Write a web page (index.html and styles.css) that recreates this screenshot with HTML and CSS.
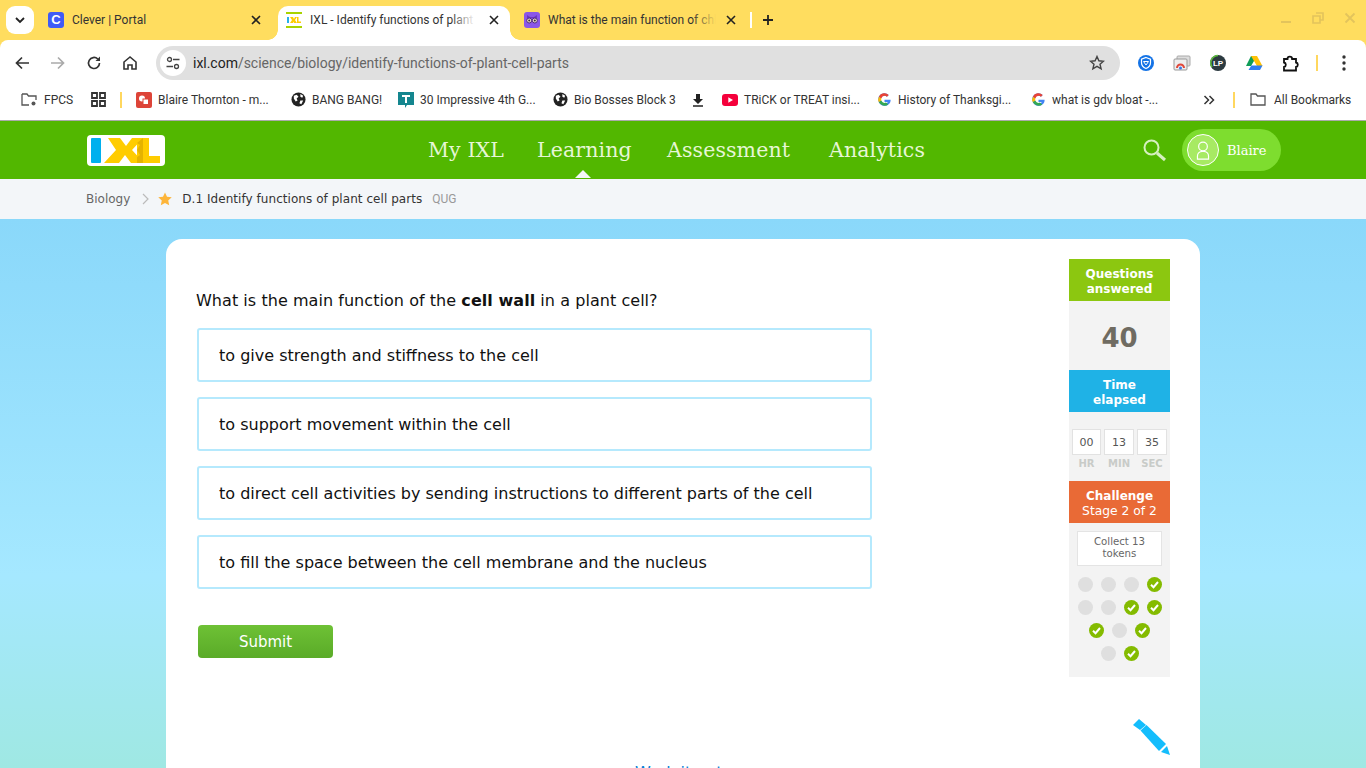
FILE: index.html
```html
<!DOCTYPE html>
<html lang="en">
<head>
<meta charset="utf-8">
<title>IXL - Identify functions of plant cell parts</title>
<link rel="stylesheet" href="styles.css">
</head>
<body>
<div class="tabbar">
  <div class="tab-menu"><svg width="10" height="7" viewBox="0 0 10 7"><path d="M1 1l4 4 4-4" fill="none" stroke="#222" stroke-width="1.8"/></svg></div>
  <div class="tab tab-clever">
    <span class="fav fav-c">C</span><span class="tab-title">Clever | Portal</span>
    <svg class="tab-x" width="10" height="10" viewBox="0 0 10 10"><path d="M1 1l8 8M9 1l-8 8" stroke="#222" stroke-width="1.6"/></svg>
  </div>
  <div class="tab tab-active">
    <svg class="fav" width="16" height="16" viewBox="0 0 16 16"><rect y="0" width="16" height="2" fill="#a9d300"/><rect y="14" width="16" height="2" fill="#a9d300"/><rect x="1" y="5" width="2" height="6" fill="#26b0ea"/><path d="M4 5h3l1 2 1-2h2l-2 3 2 3H8L7.500 9.500 7 11H4l2-3z" fill="#fc0"/><path d="M11 5h1.500v4.500H15V11h-4z" fill="#fc0"/></svg>
    <span class="tab-title tab-fade">IXL - Identify functions of plant cell parts</span>
    <svg class="tab-x" width="10" height="10" viewBox="0 0 10 10"><path d="M1 1l8 8M9 1l-8 8" stroke="#222" stroke-width="1.6"/></svg>
  </div>
  <div class="tab tab-third">
    <svg class="fav" width="16" height="16" viewBox="0 0 16 16"><rect width="16" height="16" rx="3" fill="#8a56e8"/><path d="M3 3l3 2h4l3-2v3H3z" fill="#6d35bf"/><circle cx="5.200" cy="8.500" r="2.500" fill="#f3d9d0" stroke="#4a2a80"/><circle cx="10.800" cy="8.500" r="2.500" fill="#f3d9d0" stroke="#4a2a80"/><circle cx="5.200" cy="8.500" r="1" fill="#333"/><circle cx="10.800" cy="8.500" r="1" fill="#333"/></svg>
    <span class="tab-title tab-fade-y">What is the main function of chloroplasts</span>
    <svg class="tab-x" width="10" height="10" viewBox="0 0 10 10"><path d="M1 1l8 8M9 1l-8 8" stroke="#222" stroke-width="1.6"/></svg>
  </div>
  <span class="tab-sep"></span>
  <svg class="tab-plus" width="12" height="12" viewBox="0 0 12 12"><path d="M6 1v10M1 6h10" stroke="#222" stroke-width="1.800"/></svg>
  <div class="win-controls">
    <svg width="12" height="12" viewBox="0 0 12 12"><path d="M1 10h10" stroke="#e3c45c" stroke-width="2"/></svg>
    <svg width="12" height="12" viewBox="0 0 12 12"><path d="M4 1h7v7H8.500M1 4h7v7H1z" fill="none" stroke="#e3c45c" stroke-width="1.600"/></svg>
    <svg width="12" height="12" viewBox="0 0 12 12"><path d="M1.500 1.500l9 9M10.500 1.500l-9 9" stroke="#e3c45c" stroke-width="1.800"/></svg>
  </div>
</div>
<div class="toolbar">
  <svg class="tool" width="16" height="16" viewBox="0 0 16 16"><path d="M15 8H2.500M8 2.500L2.500 8 8 13.500" fill="none" stroke="#333" stroke-width="1.700"/></svg>
  <svg class="tool" width="16" height="16" viewBox="0 0 16 16"><path d="M1 8h12.500M8 2.500L13.500 8 8 13.500" fill="none" stroke="#aaa" stroke-width="1.700"/></svg>
  <svg class="tool" width="16" height="16" viewBox="0 0 16 16"><path d="M13.500 8A5.500 5.500 0 1 1 11.800 4" fill="none" stroke="#333" stroke-width="1.700"/><path d="M14 1.500V6H9.500z" fill="#333"/></svg>
  <svg class="tool" width="16" height="16" viewBox="0 0 16 16"><path d="M8 2L2 7v7h4v-4h4v4h4V7z" fill="none" stroke="#333" stroke-width="1.600"/></svg>
  <div class="omnibox">
    <span class="site-chip"><svg width="14" height="14" viewBox="0 0 14 14"><circle cx="3.500" cy="3.500" r="2" fill="none" stroke="#444" stroke-width="1.300"/><path d="M7 3.500h6.500M.500 10.500H7" stroke="#444" stroke-width="1.300"/><circle cx="10.500" cy="10.500" r="2" fill="none" stroke="#444" stroke-width="1.300"/></svg></span>
    <span class="url"><span class="url-host">ixl.com</span>/science/biology/identify-functions-of-plant-cell-parts</span>
    <svg class="star" width="16" height="16" viewBox="0 0 16 16"><path d="M8 1.500l1.900 4.300 4.600.4-3.500 3 1.100 4.600L8 11.300l-4.100 2.500L5 9.200l-3.500-3 4.600-.4z" fill="none" stroke="#444" stroke-width="1.400"/></svg>
  </div>
  <div class="extensions">
    <svg width="18" height="18" viewBox="0 0 18 18"><circle cx="9" cy="9" r="8" fill="#1473e6"/><path d="M9 3.500l4.500 1.700v3.500c0 2.800-2 4.700-4.500 5.800-2.500-1.100-4.500-3-4.500-5.800V5.200z" fill="none" stroke="#fff" stroke-width="1.200"/><path d="M6.500 7.500h5L9 11z" fill="none" stroke="#fff"/></svg>
    <svg width="18" height="18" viewBox="0 0 18 18"><rect x="4" y="2" width="13" height="10" rx="1" fill="#ddd" stroke="#aaa"/><rect x="1" y="5" width="13" height="11" rx="1" fill="#eee" stroke="#999"/><path d="M4 14a3.500 3.500 0 0 1 7 0" fill="none" stroke="#e0483b" stroke-width="2"/><circle cx="7.500" cy="14" r="1.500" fill="#3b78e7"/></svg>
    <svg width="18" height="18" viewBox="0 0 18 18"><circle cx="9" cy="9" r="8" fill="#2c3a40"/><path d="M9 1.500A7.500 7.500 0 0 0 3 13" fill="none" stroke="#5ebd3e" stroke-width="1.500"/><text class="lp" x="9" y="11.500" text-anchor="middle">LP</text></svg>
    <svg width="18" height="16" viewBox="0 0 18 16"><path d="M6 1h6l-6 10H1z" fill="#0f9d58"/><path d="M6 1h6l5.500 10h-5.500z" fill="#ffc107"/><path d="M3.500 15l2.800-4.500h11.200L15 15z" fill="#2f7df0"/></svg>
    <svg width="18" height="18" viewBox="0 0 18 18"><path d="M3 5h3.500a2.300 2.300 0 0 1 4.600 0H15v3.500a2.300 2.300 0 0 1 0 4.500V16.500H3v-3.500a2.300 2.300 0 0 0 0-4.500z" fill="none" stroke="#111" stroke-width="1.800"/></svg>
    <span class="ext-sep"></span>
    <svg width="4" height="16" viewBox="0 0 4 16"><circle cx="2" cy="2" r="1.700" fill="#333"/><circle cx="2" cy="8" r="1.700" fill="#333"/><circle cx="2" cy="14" r="1.700" fill="#333"/></svg>
  </div>
</div>
<div class="bookmarks">
  <span class="bm bm-fpcs"><svg width="16" height="14" viewBox="0 0 16 14"><path d="M1 1h5l1.500 2H15v4M1 1v11h7" fill="none" stroke="#555" stroke-width="1.300"/><circle cx="12.500" cy="10.500" r="2" fill="#555"/></svg>FPCS</span>
  <svg class="bm-grid" width="15" height="15" viewBox="0 0 15 15"><path d="M1 1h5v5H1zM9 1h5v5H9zM1 9h5v5H1zM9 9h5v5H9z" fill="none" stroke="#333" stroke-width="1.800"/></svg>
  <span class="bm-sep"></span>
  <span class="bm bm-blaire"><svg width="16" height="16" viewBox="0 0 16 16"><rect width="16" height="16" rx="2" fill="#dd4438"/><circle cx="6" cy="6.500" r="3" fill="#fff"/><rect x="7" y="7" width="5.500" height="5.500" fill="#fff" stroke="#dd4438"/></svg>Blaire Thornton - m...</span>
  <span class="bm bm-bang"><svg class="globe" viewBox="0 0 16 16"><circle cx="8" cy="8" r="7.500" fill="#222"/><path d="M3 4l3-1 2 2-2 2 1 2-2 1-2-3zM10 2l3 2-1 2-2-1zM10 9l3 0-2 4-2-1z" fill="#fff"/></svg>BANG BANG!</span>
  <span class="bm bm-30"><svg width="16" height="16" viewBox="0 0 16 16"><path d="M0 0h16v13H9l-2 3v-3H0z" fill="#14868f"/><path d="M4 3h8v2H9v6H7V5H4z" fill="#fff"/></svg>30 Impressive 4th G...</span>
  <span class="bm bm-bio"><svg class="globe" viewBox="0 0 16 16"><circle cx="8" cy="8" r="7.500" fill="#222"/><path d="M3 4l3-1 2 2-2 2 1 2-2 1-2-3zM10 2l3 2-1 2-2-1zM10 9l3 0-2 4-2-1z" fill="#fff"/></svg>Bio Bosses Block 3</span>
  <span class="bm bm-dl"><svg width="12" height="14" viewBox="0 0 12 14"><path d="M4 1h4v5h3l-5 5-5-5h3z" fill="#222"/><path d="M1 13h10" stroke="#222" stroke-width="1.500"/></svg></span>
  <span class="bm bm-yt"><svg width="16" height="12" viewBox="0 0 16 12"><rect width="16" height="12" rx="3" fill="#f5003b"/><path d="M6.300 3.200L11 6l-4.700 2.800z" fill="#fff"/></svg>TRiCK or TREAT insi...</span>
  <span class="bm bm-hist"><svg class="g" viewBox="0 0 16 16"><path d="M14.500 8.200H8v2.500h3.700A3.900 3.900 0 0 1 8 12a4 4 0 0 1 0-8c1 0 1.900.4 2.600 1l1.900-1.900A6.700 6.700 0 0 0 1.300 8 6.700 6.700 0 0 0 8 14.700c3.800 0 6.700-2.800 6.500-6.500z" fill="#4285f4"/><path d="M2 5l2.600 1.900A4 4 0 0 1 8 4c1 0 1.900.4 2.600 1l1.900-1.900A6.700 6.700 0 0 0 2 5z" fill="#ea4335"/><path d="M2 5a6.700 6.700 0 0 0 0 6l2.600-2a4 4 0 0 1 0-2.100z" fill="#fbbc05"/><path d="M2 11a6.700 6.700 0 0 0 10 2.200l-2.400-1.900A4 4 0 0 1 4.600 9z" fill="#34a853"/></svg>History of Thanksgi...</span>
  <span class="bm bm-gdv"><svg class="g" viewBox="0 0 16 16"><path d="M14.500 8.200H8v2.500h3.700A3.900 3.900 0 0 1 8 12a4 4 0 0 1 0-8c1 0 1.900.4 2.600 1l1.900-1.900A6.700 6.700 0 0 0 1.300 8 6.700 6.700 0 0 0 8 14.700c3.800 0 6.700-2.800 6.500-6.500z" fill="#4285f4"/><path d="M2 5l2.600 1.900A4 4 0 0 1 8 4c1 0 1.900.4 2.600 1l1.900-1.900A6.700 6.700 0 0 0 2 5z" fill="#ea4335"/><path d="M2 5a6.700 6.700 0 0 0 0 6l2.600-2a4 4 0 0 1 0-2.100z" fill="#fbbc05"/><path d="M2 11a6.700 6.700 0 0 0 10 2.200l-2.400-1.900A4 4 0 0 1 4.600 9z" fill="#34a853"/></svg>what is gdv bloat -...</span>
  <svg class="bm-more" width="12" height="10" viewBox="0 0 12 10"><path d="M1.500 1l4 4-4 4M6.500 1l4 4-4 4" fill="none" stroke="#333" stroke-width="1.500"/></svg>
  <span class="bm-sep bm-sep-r"></span>
  <span class="bm bm-all"><svg width="16" height="13" viewBox="0 0 16 13"><path d="M1 1h5l1.500 2H15v9H1z" fill="none" stroke="#555" stroke-width="1.300"/></svg>All Bookmarks</span>
</div>
<header class="ixl-nav">
  <div class="ixl-logo"><svg width="78" height="31" viewBox="0 0 78 31"><rect x="4" y="3" width="10" height="25" rx="1" fill="#00b0ee"/><path d="M21 3h12l6 8 6-8h11L45 15l12 13H44l-6-8-6 8H17l12-13z" fill="#fc0"/><path d="M50 3h12v18h11v7H50z" fill="#fc0"/><path d="M50 8l6-5v25h-6v-6l3-2-3-5 3-5z" fill="#e5b300"/></svg></div>
  <nav class="ixl-links">
    <a>My IXL</a>
    <a class="on">Learning</a>
    <a>Assessment</a>
    <a>Analytics</a>
  </nav>
  <svg class="ixl-search" width="24" height="24" viewBox="0 0 24 24"><circle cx="9.500" cy="9.500" r="7" fill="none" stroke="#d6f0bf" stroke-width="2"/><path d="M15 15l8 7" stroke="#d6f0bf" stroke-width="3"/></svg>
  <div class="user-pill">
    <span class="avatar"><svg width="16" height="19" viewBox="0 0 20 24"><circle cx="10" cy="7" r="5.500" fill="none" stroke="#fff" stroke-width="1.500"/><path d="M3 23v-4a6 6 0 0 1 6-6h2a6 6 0 0 1 6 6v4z" fill="none" stroke="#fff" stroke-width="1.500"/></svg></span>
    <span class="user-name">Blaire</span>
  </div>
</header>
<div class="crumbs">
  <span class="crumb-root">Biology</span>
  <svg class="crumb-arrow" width="8" height="12" viewBox="0 0 8 12"><path d="M1 1l5 5-5 5" fill="none" stroke="#bbb" stroke-width="1.200"/></svg>
  <svg class="crumb-star" width="14" height="14" viewBox="0 0 16 16"><path d="M8 .5l2.300 5 5.400.6-4 3.700 1.100 5.400L8 12.500l-4.800 2.700 1.100-5.400-4-3.700 5.400-.6z" fill="#fdb53a"/></svg>
  <span class="crumb-title">D.1 Identify functions of plant cell parts</span>
  <span class="crumb-code">QUG</span>
</div>
<main class="stage">
  <section class="card">
    <div class="practice">
      <p class="question">What is the main function of the <b>cell wall</b> in a plant cell?</p>
      <div class="choices">
        <div class="choice">to give strength and stiffness to the cell</div>
        <div class="choice">to support movement within the cell</div>
        <div class="choice">to direct cell activities by sending instructions to different parts of the cell</div>
        <div class="choice">to fill the space between the cell membrane and the nucleus</div>
      </div>
      <button class="submit">Submit</button>
      <p class="work-link"><a>Work it out</a></p>
    </div>
    <aside class="side">
      <div class="panel">
        <div class="head head-green">Questions<br>answered</div>
        <div class="count">40</div>
        <div class="head head-blue">Time<br>elapsed</div>
        <div class="timer">
          <div class="t-cell"><span class="t-box">00</span><span class="t-lab">HR</span></div>
          <div class="t-cell"><span class="t-box">13</span><span class="t-lab">MIN</span></div>
          <div class="t-cell"><span class="t-box">35</span><span class="t-lab">SEC</span></div>
        </div>
        <div class="head head-orange">Challenge<br><span class="stage-no">Stage 2 of 2</span></div>
        <div class="collect">Collect 13<br>tokens</div>
        <div class="tokens">
          <div class="t-row"><i class="tok"></i><i class="tok"></i><i class="tok"></i><i class="tok ok"><svg viewBox="0 0 15 15"><path d="M4 7.800l2.500 2.400L11 5" fill="none" stroke="#fff" stroke-width="2"/></svg></i></div>
          <div class="t-row"><i class="tok"></i><i class="tok"></i><i class="tok ok"><svg viewBox="0 0 15 15"><path d="M4 7.800l2.500 2.400L11 5" fill="none" stroke="#fff" stroke-width="2"/></svg></i><i class="tok ok"><svg viewBox="0 0 15 15"><path d="M4 7.800l2.500 2.400L11 5" fill="none" stroke="#fff" stroke-width="2"/></svg></i></div>
          <div class="t-row"><i class="tok ok"><svg viewBox="0 0 15 15"><path d="M4 7.800l2.500 2.400L11 5" fill="none" stroke="#fff" stroke-width="2"/></svg></i><i class="tok"></i><i class="tok ok"><svg viewBox="0 0 15 15"><path d="M4 7.800l2.500 2.400L11 5" fill="none" stroke="#fff" stroke-width="2"/></svg></i></div>
          <div class="t-row"><i class="tok"></i><i class="tok ok"><svg viewBox="0 0 15 15"><path d="M4 7.800l2.500 2.400L11 5" fill="none" stroke="#fff" stroke-width="2"/></svg></i></div>
        </div>
      </div>
      <svg class="pencil" width="38" height="37" viewBox="0 0 38 37"><path d="M0 7L6 1l7 6-6 5z" fill="#14bdfc"/><path d="M7.500 12.500L13.500 7 33 26l-7 7z" fill="#14bdfc"/><path d="M28 34l6-6 3 9z" fill="#14bdfc"/></svg>
    </aside>
  </section>
</main>
</body>
</html>
```
FILE: styles.css
```css
* { box-sizing: border-box; }
html, body { margin: 0; height: 768px; overflow: hidden; }
body { width: 1366px; background: #fff; display: flex; flex-direction: column; font-family: Roboto, "Liberation Sans", sans-serif; }

.tabbar { height: 48px; background: #ffdd5f; display: flex; align-items: flex-start; flex: none; font-size: 12px; color: #333; }
.tab-menu { width: 28px; height: 28px; margin: 6px 0 0 6px; background: #fff; border-radius: 9px; display: flex; align-items: center; justify-content: center; flex: none; }
.tab { height: 34px; margin-top: 6px; display: flex; align-items: center; position: relative; flex: none; padding-bottom: 6px; }
.tab-clever { width: 244px; padding-left: 14px; }
.tab-active { width: 232px; padding-left: 8px; background: #fff; border-radius: 10px 10px 0 0; }
.tab-active::before, .tab-active::after { content: ""; position: absolute; bottom: 0; width: 10px; height: 10px; }
.tab-active::before { left: -10px; background: radial-gradient(circle at 0 0, #ffdd5f 9.500px, #fff 10px); }
.tab-active::after { right: -10px; background: radial-gradient(circle at 100% 0, #ffdd5f 9.500px, #fff 10px); }
.tab-third { width: 240px; padding-left: 14px; }
.fav { flex: none; margin-right: 8px; }
.fav-c { width: 16px; height: 16px; background: #3f5bf6; border-radius: 3px; color: #fff; font: bold 13px/16px "Liberation Sans", sans-serif; text-align: center; }
.tab-title { white-space: nowrap; overflow: hidden; flex: 1; min-width: 0; position: relative; font-size: 12px; }
.tab-fade::after, .tab-fade-y::after { content: ""; position: absolute; top: 0; right: 0; bottom: 0; width: 24px; }
.tab-fade::after { background: linear-gradient(90deg, rgba(255,255,255,0), #fff); }
.tab-fade-y::after { background: linear-gradient(90deg, rgba(255,221,95,0), #ffdd5f); }
.tab-x { flex: none; }
.tab-clever .tab-x { margin: 0 17px 0 14px; }
.tab-active .tab-x { margin: 0 11px 0 14px; }
.tab-third .tab-x { margin: 0 14px 0 10px; }
.tab-sep { width: 2px; height: 16px; background: #fff; margin-top: 12px; flex: none; }
.tab-plus { margin: 14px 0 0 10px; flex: none; }
.win-controls { margin-left: auto; margin-top: 12px; display: flex; gap: 20px; padding-right: 10px; }

.toolbar { height: 42px; margin-top: -8px; padding: 4px 0 0 14px; background: #fff; display: flex; align-items: center; flex: none; border-radius: 8px 8px 0 0; position: relative; }
.tool { margin-right: 20px; flex: none; }
.omnibox { width: 964px; height: 34px; background: #e0e0e0; border-radius: 17px; display: flex; align-items: center; padding: 0 15px 0 4px; margin-left: -2px; flex: none; }
.site-chip { width: 26px; height: 26px; border-radius: 50%; background: #fff; display: flex; align-items: center; justify-content: center; flex: none; margin-right: 7px; }
.url { font-size: 14px; color: #666; flex: 1; letter-spacing: -0.02px; }
.url-host { color: #222; }
.star { flex: none; }
.extensions { display: flex; align-items: center; gap: 18px; margin-left: 17px; flex: none; }
.ext-sep { width: 2px; height: 16px; background: #ffd75e; margin: 0 6px 0 -1px; }
.lp { font: bold 8px "Liberation Sans", sans-serif; fill: #fff; }

.bookmarks { height: 39px; background: #fff; border-bottom: 1px solid #aaa; display: flex; align-items: center; flex: none; font-size: 12px; color: #333; padding: 0 0 3px 20px; white-space: nowrap; }
.bm { display: inline-flex; align-items: center; gap: 6px; flex: none; padding-left: 1px; }
.bm svg { flex: none; }
.globe, .g { width: 15px; height: 15px; }
.bm-fpcs { width: 71px; gap: 7px; }
.bm-grid { margin-right: 14px; flex: none; }
.bm-sep { width: 2px; height: 16px; background: #ffd75e; flex: none; margin-right: 13px; }
.bm-blaire { width: 155px; }
.bm-bang { width: 107px; }
.bm-30 { width: 155px; }
.bm-bio { width: 139px; }
.bm-dl { width: 30px; }
.bm-yt { width: 155px; }
.bm-hist { width: 154px; }
.bm-gdv { width: 173px; }
.bm-more { margin-right: 18px; flex: none; }
.bm-sep-r { margin-right: 14px; }
.bm-all { gap: 8px; }

.ixl-nav { height: 58px; background: #52b700; display: flex; align-items: center; flex: none; padding: 0 85px 0 87px; }
.ixl-logo { width: 78px; height: 31px; background: #fff; border-radius: 4px; flex: none; }
.ixl-logo svg { display: block; }
.ixl-links { display: grid; grid-template-columns: 109px 130px 162px auto; margin-left: 263px; font-family: "DejaVu Serif", "Liberation Serif", serif; font-size: 20.500px; letter-spacing: 0.1px; color: #e6f6d6; white-space: nowrap; }
.ixl-links a { position: relative; }
.ixl-links .on::after { content: ""; position: absolute; left: 38px; bottom: -16px; border: 8px solid transparent; border-top: 0; border-bottom-color: #f3f6f9; }
.ixl-search { margin-left: auto; margin-right: 16px; flex: none; }
.user-pill { width: 99px; height: 42px; border-radius: 21px; background: #7edd2f; display: flex; align-items: center; padding-left: 5px; flex: none; color: #fff; }
.avatar { width: 32px; height: 32px; border-radius: 50%; background: #a7ea63; border: 1px solid #fff; display: flex; align-items: center; justify-content: center; flex: none; }
.user-name { font-family: "DejaVu Serif", serif; font-size: 13px; margin-left: 8px; }

.crumbs { height: 40px; background: #f3f6f9; display: flex; align-items: center; flex: none; padding-left: 86px; font-family: "DejaVu Sans", sans-serif; font-size: 12px; }
.crumb-root { color: #666; }
.crumb-arrow { margin: 0 8px 0 12px; flex: none; }
.crumb-star { flex: none; margin-right: 10px; }
.crumb-title { color: #333; letter-spacing: 0.05px; }
.crumb-code { margin-left: 10px; color: #999; font-family: Roboto, sans-serif; }

.stage { flex: 1; min-height: 0; background: linear-gradient(180deg, #8ad8fa 0%, #a5e8ff 65%, #9fe8e3 100%); padding: 20px 0 0 166px; overflow: hidden; }
.card { width: 1034px; height: 560px; background: #fff; border-radius: 16px; display: flex; font-family: "DejaVu Sans", Verdana, sans-serif; }
.practice { width: 903px; padding: 50px 0 0 30px; flex: none; }
.question { margin: 0; font-size: 16px; line-height: 24px; letter-spacing: 0.05px; color: #111; height: 39px; white-space: nowrap; }
.choices { display: flex; flex-direction: column; gap: 15px; margin-left: 1px; }
.choice { width: 675px; height: 54px; border: 2px solid #b5e9fd; border-radius: 3px; padding: 1px 0 0 20px; display: flex; align-items: center; font-size: 16px; color: #111; white-space: nowrap; }
.submit { display: block; margin: 36px 0 0 2px; width: 135px; height: 33px; border: 0; border-radius: 4px; background: linear-gradient(180deg, #6ec135, #5aab28); color: #fff; font-family: "DejaVu Sans", Verdana, sans-serif; font-size: 15px; padding: 0; }
.work-link { margin: 105px 0 0 439px; font-size: 16px; line-height: 20px; white-space: nowrap; }
.work-link a { color: #0a7fd6; }
.side { width: 101px; margin-top: 20px; flex: none; }
.panel { background: #f3f3f3; height: 418px; text-align: center; }
.head { color: #fff; font-weight: bold; font-size: 12px; line-height: 15px; height: 42px; padding-top: 8px; }
.head-green { background: #8cc710; }
.head-blue { background: #1fb2e6; }
.head-orange { background: #e96a36; }
.stage-no { font-weight: normal; font-size: 12.300px; line-height: 1; }
.count { height: 69px; padding-top: 4px; display: flex; align-items: center; justify-content: center; font-size: 26px; font-weight: bold; color: #6f6b61; }
.timer { display: flex; justify-content: center; gap: 3px; height: 69px; padding-top: 17px; }
.t-cell { width: 30px; display: flex; flex-direction: column; align-items: center; }
.t-cell:first-child { width: 29px; }
.t-box { width: 100%; height: 26px; background: #fff; border: 1px solid #e2e2e2; font-size: 11px; color: #555; display: flex; align-items: center; justify-content: center; }
.t-lab { font-size: 10px; font-weight: bold; color: #c8cbc8; margin-top: 1px; line-height: 15px; }
.collect { width: 85px; height: 35px; margin: 8px auto 0; background: #fff; border: 1px solid #e4e4e4; font-size: 10.200px; line-height: 12px; color: #666; padding-top: 4px; }
.tokens { margin-top: 11px; display: flex; flex-direction: column; gap: 8px; align-items: center; }
.t-row { display: flex; gap: 8px; height: 15px; }
.tok { width: 15px; height: 15px; border-radius: 50%; background: #dfdfdf; display: block; }
.tok.ok { background: #84bb00; }
.tok svg { display: block; }
.pencil { display: block; margin-top: 41px; margin-left: 64px; }
```
